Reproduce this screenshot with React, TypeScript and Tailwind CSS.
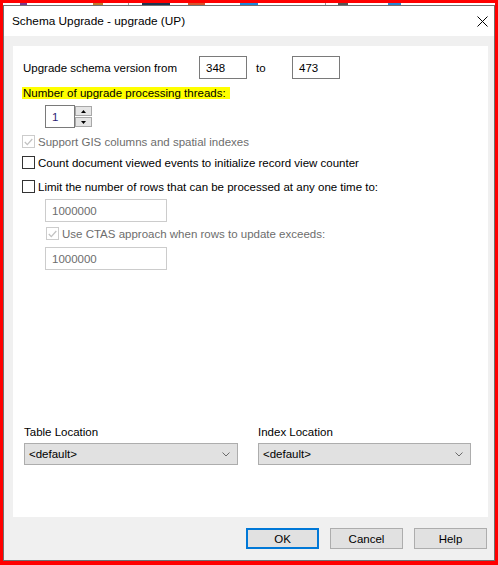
import { ReactNode } from "react";

const FONT = "font-['Segoe_UI','Liberation_Sans',Arial,sans-serif]";

function Check({ checked, disabled }: { checked?: boolean; disabled?: boolean }) {
  return (
    <span
      className={[
        "flex h-[13px] w-[13px] shrink-0 items-center justify-center border bg-white",
        disabled ? "border-[#cccccc]" : "border-[#333333]",
      ].join(" ")}
    >
      {checked && (
        <svg width="9" height="8" viewBox="0 0 9 8">
          <path d="M0.8 4 L3.3 6.6 L8.3 1" fill="none" stroke="#c2c2c2" strokeWidth="1.3" />
        </svg>
      )}
    </span>
  );
}

function CheckRow({
  label,
  checked,
  disabled,
  className,
}: {
  label: string;
  checked?: boolean;
  disabled?: boolean;
  className?: string;
}) {
  return (
    <div className={["flex h-[13px] items-center", className].join(" ")}>
      <Check checked={checked} disabled={disabled} />
      <span className={["ml-[3px] whitespace-nowrap", disabled ? "text-[#6d6d6d]" : "text-black"].join(" ")}>
        {label}
      </span>
    </div>
  );
}

function TextBox({ value, disabled, className }: { value: string; disabled?: boolean; className?: string }) {
  return (
    <div
      className={[
        "flex h-[23px] items-center border bg-white px-[6px]",
        disabled ? "border-[#cccccc] text-[#6d6d6d]" : "border-[#7a7a7a] text-black",
        className,
      ].join(" ")}
    >
      {value}
    </div>
  );
}

function Combo({ className }: { className?: string }) {
  return (
    <div
      className={[
        "flex h-[22px] items-center justify-between border border-[#adadad] bg-[#e1e1e1] pl-[4px] pr-[7px]",
        className,
      ].join(" ")}
    >
      <span>&lt;default&gt;</span>
      <svg width="8" height="5" viewBox="0 0 8 5">
        <path d="M0.5 0.5 L4 4 L7.5 0.5" fill="none" stroke="#6a6a6a" strokeWidth="1" />
      </svg>
    </div>
  );
}

function Button({ children, primary }: { children: ReactNode; primary?: boolean }) {
  return (
    <div
      className={[
        "flex h-[21px] w-[73px] items-center justify-center bg-[#e1e1e1]",
        primary ? "border-2 border-[#0078d7]" : "border border-[#adadad]",
      ].join(" ")}
    >
      {children}
    </div>
  );
}

export default function App() {
  return (
    <div className={`h-[565px] w-[498px] border-[3px] border-b-4 border-[#ff0000] bg-white text-[11.5px] leading-[16px] text-black ${FONT}`}>
      {/* bits of the desktop behind the dialog */}
      <div className="flex h-[2px] items-stretch">
        <span className="ml-[17px] w-[7px] bg-[#7b3a8e]" />
        <span className="ml-[66px] w-[10px] bg-[#c07a2a]" />
        <span className="ml-[25px] w-px bg-[#999999]" />
        <span className="ml-[13px] w-[28px] bg-[#1f3550]" />
        <span className="ml-[18px] w-[17px] bg-[#d9542c]" />
        <span className="ml-[35px] w-[18px] bg-[#1e88d8]" />
        <span className="ml-[67px] w-px bg-[#999999]" />
        <span className="ml-[12px] w-[10px] bg-[#555555]" />
        <span className="ml-[40px] w-[13px] bg-[#2a86d0]" />
      </div>

      <div className="flex h-[556px] flex-col border border-[#707070] bg-[#f0f0f0]">
        {/* title bar */}
        <div className="flex h-[30px] shrink-0 items-center justify-between bg-white pl-[8px] pr-[6px]">
          <span className="text-[11.8px]">Schema Upgrade - upgrade (UP)</span>
          <svg width="11" height="11" viewBox="0 0 11 11">
            <path d="M0.5 0.5 L10.5 10.5 M10.5 0.5 L0.5 10.5" stroke="#000" strokeWidth="1" />
          </svg>
        </div>

        {/* body */}
        <div className="ml-[9px] mr-[6px] mt-[10px] flex h-[471px] flex-col bg-white pl-[10px] pt-[10px]">
          <div className="flex items-center">
            <span className="w-[176px]">Upgrade schema version from</span>
            <TextBox value="348" className="w-[48px]" />
            <span className="ml-[9px] w-[36px]">to</span>
            <TextBox value="473" className="w-[48px]" />
          </div>

          <div className="mt-[8px] flex">
            <span className="-ml-px h-[12px] bg-[#ffff00] pl-px pr-[4px] leading-[12px]">
              Number of upgrade processing threads:
            </span>
          </div>

          {/* spinner */}
          <div className="ml-[22px] mt-[6px] flex h-[23px] w-[47px] items-center">
            <div className="flex h-[23px] w-[30px] items-center border border-[#7a7a7a] px-[6px] text-[#2b1d74]">1</div>
            <div className="flex h-[21px] w-[18px] flex-col gap-px">
              <div className="flex h-[10px] items-center justify-center border border-[#a8a8a8] bg-[#e5e5e5]">
                <svg width="5" height="3" viewBox="0 0 5 3">
                  <path d="M2.5 0 L5 3 L0 3 Z" fill="#000" />
                </svg>
              </div>
              <div className="flex h-[10px] items-center justify-center border border-[#a8a8a8] bg-[#e5e5e5]">
                <svg width="5" height="3" viewBox="0 0 5 3">
                  <path d="M0 0 L5 0 L2.5 3 Z" fill="#000" />
                </svg>
              </div>
            </div>
          </div>

          <CheckRow className="-ml-px mt-[7px]" label="Support GIS columns and spatial indexes" checked disabled />
          <CheckRow className="-ml-px mt-[8px]" label="Count document viewed events to initialize record view counter" />
          <CheckRow className="-ml-px mt-[11px]" label="Limit the number of rows that can be processed at any one time to:" />

          <TextBox value="1000000" disabled className="ml-[22px] mt-[6px] w-[122px]" />
          <CheckRow className="ml-[23px] mt-[5px]" label="Use CTAS approach when rows to update exceeds:" checked disabled />
          <TextBox value="1000000" disabled className="ml-[22px] mt-[7px] w-[122px]" />

          {/* locations */}
          <div className="-ml-[10px] mb-[52px] mt-auto flex gap-[20px] pl-[11px]">
            <div className="flex w-[214px] flex-col gap-[3px]">
              <span>Table Location</span>
              <Combo />
            </div>
            <div className="flex w-[213px] flex-col gap-[3px]">
              <span>Index Location</span>
              <Combo />
            </div>
          </div>
        </div>

        {/* buttons */}
        <div className="mr-[7px] mt-[11px] flex justify-end gap-[11px]">
          <Button primary>OK</Button>
          <Button>Cancel</Button>
          <Button>Help</Button>
        </div>
      </div>
    </div>
  );
}
